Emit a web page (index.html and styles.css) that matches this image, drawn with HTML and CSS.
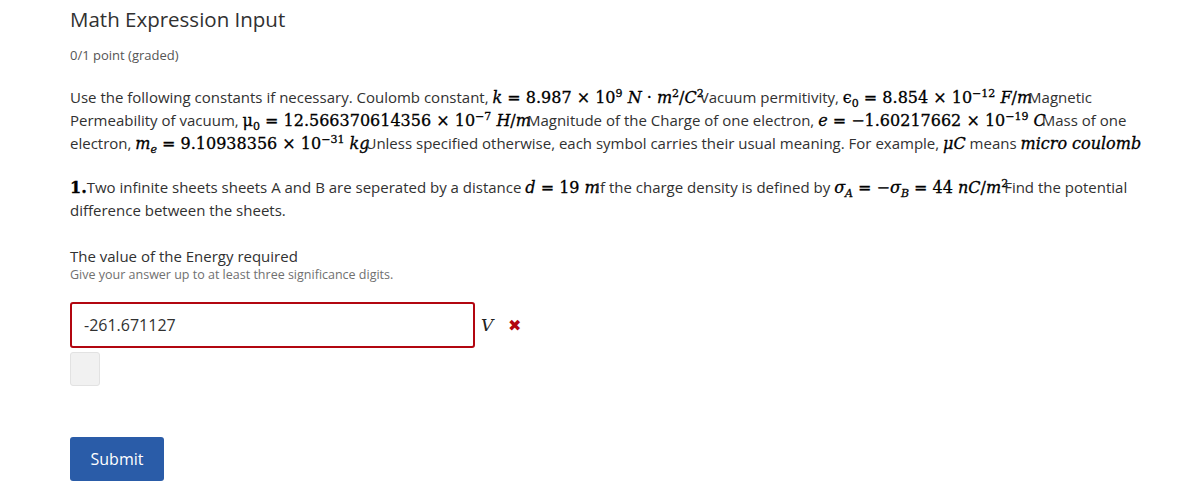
FILE: index.html
```html
<!DOCTYPE html>
<html>
<head>
<meta charset="utf-8">
<link rel="stylesheet" href="styles.css">
</head>
<body>
<div class="problem">
  <h2 class="title">Math Expression Input</h2>
  <div class="points">0/1 point (graded)</div>
  <p class="constants">Use the following constants if necessary. Coulomb constant, <span class="m"><i>k</i> = 8.987 × 10<sup>9</sup> <i>N</i> · <i>m</i><sup>2</sup>/<i>C</i><sup>2</sup></span><span class="ov">Vacuum permitivity, </span><span class="m">ϵ<sub>0</sub> = 8.854 × 10<sup>−12</sup> <i>F</i>/<i>m</i></span><span class="ov">Magnetic</span><br>Permeability of vacuum, <span class="m">μ<sub>0</sub> = 12.566370614356 × 10<sup>−7</sup> <i>H</i>/<i>m</i></span><span class="ov">Magnitude of the Charge of one electron, </span><span class="m"><i>e</i> = −1.60217662 × 10<sup>−19</sup> <i>C</i></span><span class="ov">Mass of one</span><br>electron, <span class="m"><i>m<sub>e</sub></i> = 9.10938356 × 10<sup>−31</sup> <i>kg</i></span><span class="ov">Unless specified otherwise, each symbol carries their usual meaning. For example, </span><span class="m"><i>μC</i></span> means <span class="m"><i>micro coulomb</i></span></p>
  <p class="question"><span class="m num">1.</span>Two infinite sheets sheets A and B are seperated by a distance <span class="m"><i>d</i> = 19 <i>m</i></span><span class="ov">If the charge density is defined by </span><span class="m"><i>σ<sub>A</sub></i> = −<i>σ<sub>B</sub></i> = 44 <i>nC</i>/<i>m</i><sup>2</sup></span><span class="ov">Find the potential</span><br>difference between the sheets.</p>
  <div class="label">The value of the Energy required</div>
  <div class="hint">Give your answer up to at least three significance digits.</div>
  <div class="answer-row">
    <div class="input">-261.671127</div>
    <span class="unit">V</span>
    <span class="cross">✖</span>
  </div>
  <div class="preview"></div>
  <button class="submit">Submit</button>
</div>
</body>
</html>
```
FILE: styles.css
```css
html, body { margin: 0; padding: 0; background: #fff; }
body { font-family: "Open Sans", "Noto Sans", sans-serif; color: #313131; }
.problem { padding: 5px 0 0 70px; }
.title { font-size: 20.5px; font-weight: 400; margin: 0; line-height: 28px; color: #313131; }
.points { font-size: 13px; color: #555; margin-top: 13px; line-height: 18px; }
.constants, .question { font-size: 15px; line-height: 23px; margin: 0; white-space: nowrap; }
.constants { margin-top: 22px; }
.question { margin-top: 21px; }
.m { font-family: "DejaVu Serif", "Liberation Serif", serif; font-size: 16px; font-weight: 400; color: #000; -webkit-text-stroke: 0.3px #000; }
.m i { font-style: italic; }
.m sup, .m sub { font-size: 11px; line-height: 0; }
.num { font-weight: 700; }
.ov { margin-left: -4px; }
.q-text { letter-spacing: 0.1px; }
.label { font-size: 15px; margin-top: 24px; line-height: 20px; }
.hint { font-size: 12.5px; color: #707070; line-height: 18px; }
.answer-row { display: flex; align-items: center; margin-top: 18px; }
.input { width: 377px; height: 42px; border: 2px solid #b20610; border-radius: 3px; padding: 0 12px; font-size: 16px; line-height: 42px; color: #313131; }
.unit { font-family: "DejaVu Serif", "Liberation Serif", serif; font-style: italic; font-size: 17px; margin-left: 6px; color: #222; }
.cross { color: #b20610; font-size: 16px; margin-left: 15px; }
.preview { width: 28px; height: 32px; background: #f1f1f1; border: 1px solid #e2e2e2; border-radius: 3px; margin-top: 4px; }
.submit { display: block; margin-top: 51px; width: 94px; height: 44px; background: #2a5ca8; color: #fff; border: none; border-radius: 3px; font-family: "Open Sans", sans-serif; font-size: 16px; }
```
